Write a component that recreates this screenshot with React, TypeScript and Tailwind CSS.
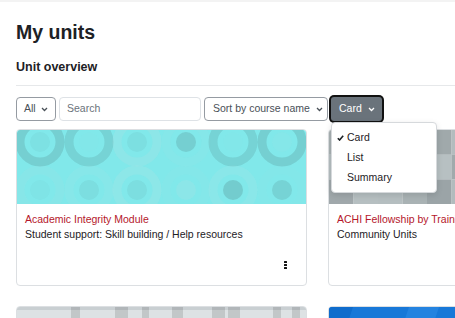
import React from "react";

const font = { fontFamily: '"Liberation Sans", Arial, sans-serif' };

function Chevron({ color = "#495057" }: { color?: string }) {
  return (
    <svg width="7" height="5" viewBox="0 0 7 5" className="shrink-0">
      <polyline points="1,1 3.5,3.5 6,1" fill="none" stroke={color} strokeWidth="1.3" />
    </svg>
  );
}

type Ring = { x: number; y: number; ring: [string, number]; dot: [string, number] };
const D = "#222";
const L = "#ddd";
const rings: Ring[] = [
  { x: 23, y: 12, ring: [D, 0.12], dot: [D, 0.03] },
  { x: 72, y: 12, ring: [D, 0.1], dot: [L, 0.02] },
  { x: 120, y: 12, ring: [L, 0.14], dot: [D, 0.04] },
  { x: 169, y: 12, ring: [L, 0.05], dot: [D, 0.12] },
  { x: 216, y: 12, ring: [D, 0.1], dot: [L, 0.02] },
  { x: 265, y: 12, ring: [D, 0.12], dot: [L, 0.05] },
  { x: 23, y: 60, ring: [L, 0.08], dot: [D, 0.02] },
  { x: 72, y: 60, ring: [L, 0.07], dot: [D, 0.05] },
  { x: 120, y: 60, ring: [L, 0.13], dot: [D, 0.05] },
  { x: 169, y: 60, ring: [L, 0.04], dot: [L, 0.12] },
  { x: 216, y: 60, ring: [L, 0.1], dot: [D, 0.14] },
  { x: 265, y: 60, ring: [L, 0.03], dot: [D, 0.1] },
];

function CirclesPattern() {
  return (
    <svg width="289" height="74" viewBox="0 0 289 74" className="block">
      <rect width="289" height="74" fill="#81e8ea" />
      {rings.map((r, i) => (
        <g key={i}>
          <circle cx={r.x} cy={r.y} r="20" fill="none" stroke={r.ring[0]} strokeOpacity={r.ring[1]} strokeWidth="9" />
          <circle cx={r.x} cy={r.y} r="10" fill={r.dot[0]} fillOpacity={r.dot[1]} />
        </g>
      ))}
    </svg>
  );
}

const grays = [
  ["#a9b2b4", "#b1babc", "#a4adaf", "#bcc4c6", "#a0a9ab", "#b3bcbe", "#a6afb1", "#b8c0c2", "#a2abad", "#b0b9bb", "#a8b1b3", "#b5bec0"],
  ["#b6bfc1", "#a3acae", "#bac3c5", "#aab3b5", "#b7c0c2", "#a1aaac", "#b9c2c4", "#a7b0b2", "#b4bdbf", "#a5aeb0", "#bbc3c5", "#a3acae"],
  ["#a0a8ab", "#b6bfc1", "#b5bec0", "#a9b2b4", "#9ba4a7", "#b2bbbd", "#a4adaf", "#b8c1c3", "#a1aaac", "#b3bcbe", "#a6afb1", "#b7c0c2"],
];

function SquaresPattern() {
  return (
    <svg width="289" height="74" viewBox="0 0 289 74" className="block">
      {grays.map((row, r) =>
        row.map((c, i) => <rect key={`${r}-${i}`} x={i * 24.5} y={r * 24.7} width="24.6" height="24.8" fill={c} />)
      )}
    </svg>
  );
}

function BarsPattern() {
  const bars = [
    [54, 9], [98, 13], [125, 7], [155, 11], [195, 13], [211, 12], [256, 8], [275, 8],
  ];
  return (
    <svg width="289" height="74" viewBox="0 0 289 74" className="block">
      <rect width="289" height="74" fill="#dde2e4" />
      <rect width="289" height="3" fill="#c9cfd2" />
      {bars.map(([x, w], i) => (
        <rect key={i} x={x} y="0" width={w} height="74" fill="#222" fillOpacity="0.14" />
      ))}
    </svg>
  );
}

function BluePattern() {
  return (
    <svg width="289" height="74" viewBox="0 0 289 74" className="block">
      <rect width="289" height="74" fill="#1878d8" />
      <polygon points="0,0 24,0 14,30 0,30" fill="#0f6ccc" />
      <polygon points="80,0 110,0 100,30 70,30" fill="#2483e0" />
    </svg>
  );
}

function Dots() {
  return (
    <div className="flex flex-col gap-[1.5px] items-center">
      <div className="w-[3px] h-[2.5px] bg-[#111] rounded-[0.5px]" />
      <div className="w-[3px] h-[2.5px] bg-[#111] rounded-[0.5px]" />
      <div className="w-[3px] h-[2.5px] bg-[#111] rounded-[0.5px]" />
    </div>
  );
}

function Card({
  image,
  title,
  subtitle,
  showDots = true,
}: {
  image: React.ReactNode;
  title?: string;
  subtitle?: string;
  showDots?: boolean;
}) {
  return (
    <div className="w-[291px] shrink-0 border border-[#dcdfe2] rounded-[4px] overflow-hidden bg-white">
      <div className="h-[74px] overflow-hidden">{image}</div>
      {title !== undefined && (
        <div className="pt-[8px] pb-[16px] px-[8px] text-[10.5px] leading-[15px]">
          <div className="text-[#b5172b] whitespace-nowrap">{title}</div>
          <div className="text-[#1d2125] whitespace-nowrap">{subtitle}</div>
          <div className="flex justify-end pr-[11px] mt-[19px] h-[8px]">{showDots ? <Dots /> : null}</div>
        </div>
      )}
    </div>
  );
}

export default function App() {
  return (
    <div className="w-[455px] h-[318px] overflow-hidden bg-white relative" style={font}>
      <div className="h-[2px] bg-[#f3f3f3]" />
      <div className="px-[16px]">
        <h1 className="mt-[18px] text-[19.5px] leading-[24px] font-bold text-[#1d2125]">My units</h1>
        <h2 className="mt-[15px] text-[12.5px] leading-[16px] font-bold text-[#1d2125]">Unit overview</h2>
        <div className="mt-[10px] h-px w-[600px] bg-[#e6e8ea]" />
        <div className="mt-[11px] flex items-center gap-[3px] text-[10.5px] relative">
          <div className="w-[40px] h-[24px] border border-[#959ba2] rounded-[4px] flex items-center pl-[7px] gap-[5px] text-[#495057]">
            <span>All</span>
            <Chevron />
          </div>
          <div className="w-[142px] h-[24px] border border-[#dee2e6] rounded-[4px] flex items-center pl-[7px] text-[#6a737b]">
            Search
          </div>
          <div className="w-[124px] h-[24px] border border-[#959ba2] rounded-[4px] flex items-center pl-[8px] gap-[6px] text-[#495057]">
            <span>Sort by course name</span>
            <Chevron />
          </div>
          <div className="relative">
            <div className="w-[51px] h-[24px] bg-[#6a737b] rounded-[3px] ring-2 ring-[#111] flex items-center pl-[8px] gap-[6px] text-white">
              <span>Card</span>
              <Chevron color="#ffffff" />
            </div>
            <div className="absolute left-0 top-[25px] z-10 w-[106px] bg-white border border-[#d6d9dc] rounded-[4px] shadow-[0_2px_6px_rgba(0,0,0,0.12)] pt-[5px] pb-[4px] text-[10.5px] text-[#1d2125]">
              <div className="h-[20px] flex items-center relative pl-[15px]">
                <svg width="7" height="6" viewBox="0 0 7 6" className="absolute left-[5px] top-[7px]">
                  <polyline points="0.8,3.2 2.6,5 6.2,0.8" fill="none" stroke="#1d2125" strokeWidth="1.6" />
                </svg>
                Card
              </div>
              <div className="h-[20px] flex items-center pl-[15px]">List</div>
              <div className="h-[20px] flex items-center pl-[15px]">Summary</div>
            </div>
          </div>
        </div>
        <div className="mt-[8px] grid grid-cols-[291px_291px] gap-x-[21px] gap-y-[20px] w-max">
          <Card
            image={<CirclesPattern />}
            title="Academic Integrity Module"
            subtitle="Student support: Skill building / Help resources"
          />
          <Card
            image={<SquaresPattern />}
            title="ACHI Fellowship by Training Program"
            subtitle="Community Units"
            showDots={false}
          />
          <Card image={<BarsPattern />} />
          <Card image={<BluePattern />} />
        </div>
      </div>
    </div>
  );
}
